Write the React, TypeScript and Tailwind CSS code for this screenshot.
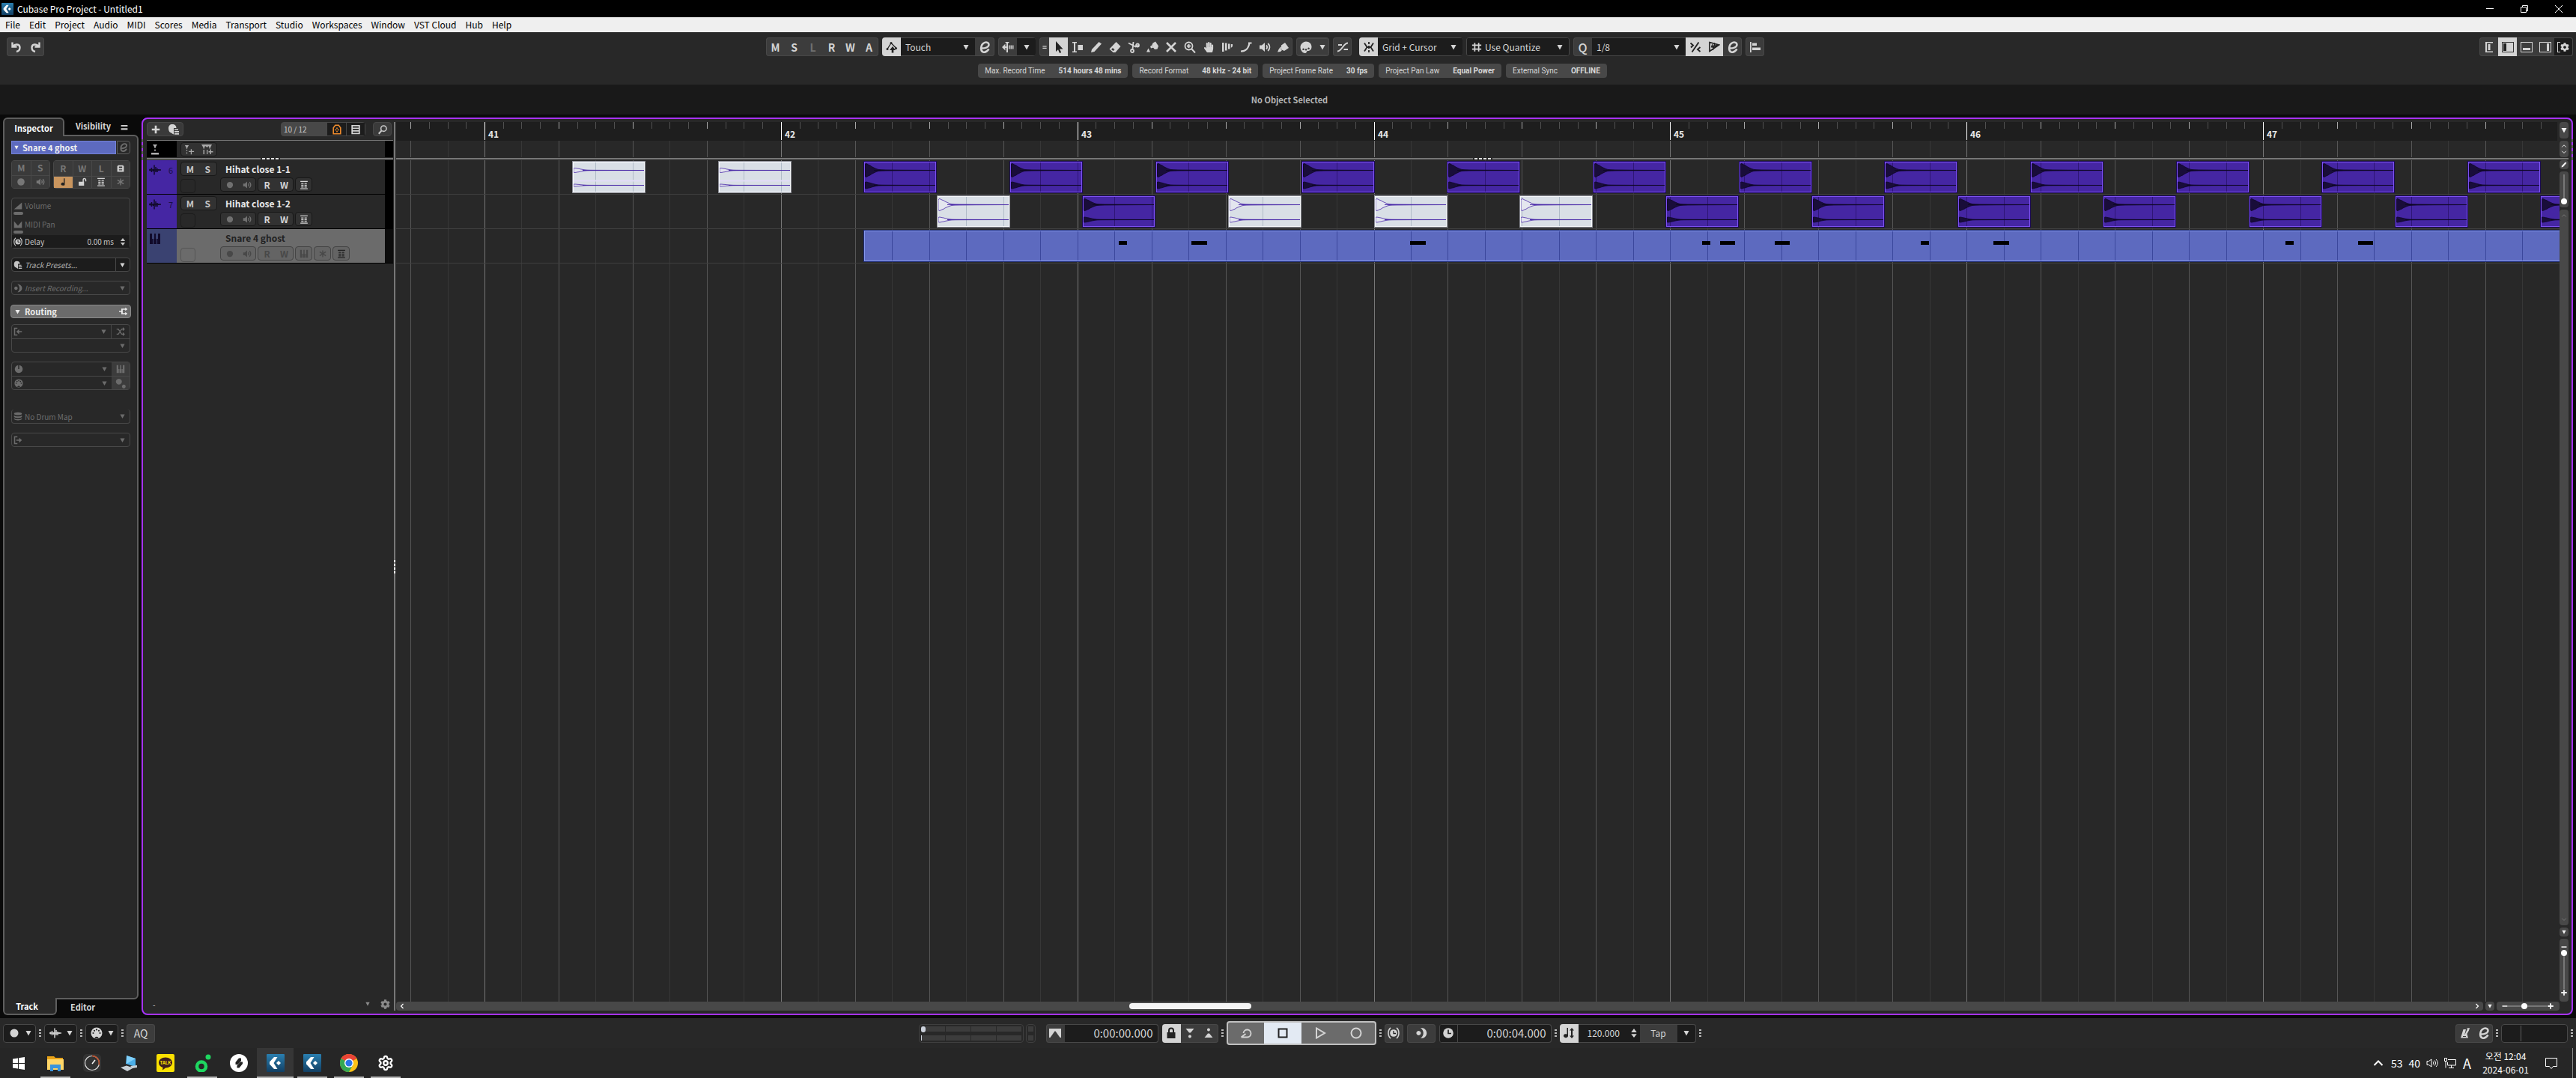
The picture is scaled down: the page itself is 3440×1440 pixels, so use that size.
import React from 'react';
import { FaCog, FaHandPaper } from 'react-icons/fa';
import { Settings } from 'lucide-react';

/* ---------- icons ---------- */

const line = { fill: 'none', stroke: 'currentColor', strokeWidth: 1.8 } as const;

const glyphs: Record<string, React.ReactNode> = {
  undo: <path {...line} strokeWidth={2.4} d="M2.500 1.500v6h6M3.500 6.500C6 3.500 12.500 3.500 12.500 8.500c0 3-2 5-4.500 5.500" />,
  redo: <path {...line} strokeWidth={2.4} d="M13.500 1.500v6h-6M12.500 6.500C10 3.500 3.500 3.500 3.500 8.500c0 3 2 5 4.500 5.500" />,
  edit: <path {...line} strokeWidth={2.5} d="M2.500 9.500C8 10 13.500 8 13.500 4.800 13.500 1 9 .8 6 3S1.500 13 6 14.500c3 .8 5.500-1 7.500-4" />,
  automation: (
    <g>
      <path {...line} strokeWidth={1.3} d="M2 10.500 7 2.500l6.500 6.500" />
      <circle cx="7" cy="2.500" r="1.500" />
      <circle cx="2" cy="10.500" r="1.500" />
      <circle cx="13.500" cy="9.500" r="1.500" />
      <path d="m9 7 4 5h-2.700v3.500H7.700V12H5z" />
    </g>
  ),
  autoscroll: <path d="M0 8l4.500-4.500v9zM4 7h2V3L4 1h6L8 3v12H6V9H4zM9 5.500h1.500v5H9zM11.500 5.500H13v5h-1.500zM14 5.500h1.500v5H14z" />,
  pointer: <path d="M4 0v14l3-2.800L9 16l2.200-1L9 10.500h4.500z" />,
  range: <path d="M1 1h6v1.500H5v11h2V15H1v-1.500h2v-11H1zM8.500 5H15v7H8.500z" />,
  pencil: <path d="m1 15 1-4L11.500 1 15 3.500 5.500 14z" />,
  eraser: <path d="M9.500 1 15.500 7l-7 8H5.500L.5 10.500zM5 9l-2 2 2.500 2 2-1.500z" fillRule="evenodd" />,
  scissorsHoles: (
    <g {...line}>
      <path d="M1 2.500 10.500 7.500l3.500-2M6.500 10.500 7.500 1" />
      <circle cx="13" cy="5.500" r="2" />
      <circle cx="6" cy="13" r="2" />
    </g>
  ),
  glue: <path d="M8.500 2.500 12 .5l4 6-1.500 4-3.500.5-4-5zM7 5.500 5 7l1 2.500 3-1zM2.500 9.500l2.500 5H0z" />,
  cross: <path {...line} strokeWidth={2.600} d="M2 2l12 12M14 2 2 14" />,
  zoom: (
    <g {...line}>
      <circle cx="6.500" cy="6.500" r="5" />
      <path d="M10 10l5 5.500M4 6.500h5M6.500 4v5" strokeWidth={2} />
    </g>
  ),
  search: (
    <g {...line}>
      <circle cx="9.500" cy="6.500" r="4.200" />
      <path d="M6.500 9.500 2 14.500" strokeWidth={2.400} />
    </g>
  ),
  comp: <path d="M1 2h2.500v12H1zM5 2.500h2.500v10H5zM9 3.500h2.500v7H9zM12.800 4H15v3l-2.200 2z" />,
  curve: <path {...line} strokeWidth={2.200} d="M1 13.500C8 13.500 11 10 12.500 2.500M15.500 2.500h-4.500" />,
  speaker: (
    <g>
      <path d="M1 5.500h3L8 2v12l-4-3.500H1z" />
      <path {...line} d="M10 5.500c1.500 1.500 1.500 3.500 0 5M12.200 3c3 2.800 3 7.200 0 10" />
    </g>
  ),
  fill: <path d="M5 5.500 10 2l5 7-6 4-4.500-2zM4 7.500 1.500 11 0 14.500l4-.5 2-2z" />,
  palette: <path fillRule="evenodd" d="M8 .5c4.500 0 7.500 3 7.500 7S13 13 10.500 13 9.500 16 7 16C3 16 .5 11.500.5 8S4 .5 8 .5zM4.500 9.500a1.300 1.300 0 1 0 .1 0zM8 10a1.300 1.300 0 1 0 .1 0zM11.500 8.500a1.300 1.300 0 1 0 .1 0z" />,
  crossfade: <path {...line} strokeWidth={2} d="M1 13.500C7 13.500 9 2.500 15 2.500M2 5h5M9.500 11H15" />,
  snap: <path {...line} strokeWidth={1.800} d="M8 1v3M8 6v4M8 12v3M2 2.500l3.500 5.500L2 13.500M14 2.500l-3.500 5.500 3.500 5.500M5.500 8h5" />,
  hash: <path {...line} strokeWidth={2} d="M5 1.500v13M11 1.500v13M1 5h14M1 11h14" />,
  swing: <path {...line} strokeWidth={1.900} d="M1.500 2.500 5 5.500 2 8.500M12.500 1.500l-9 13M14.500 8 11 11l3.500 3" />,
  quantAudio: <path {...line} strokeWidth={1.700} d="M2 1.500v12L14.500 5zM4.500 8.500l1-3 1.500 4 1.500-5 1 3 2-2.500" />,
  align: <path d="M1 1h1.800v14H1zM4 2.500h6V6H4zM4 8.500h11V12H4z" />,
  plus: <path d="M6.500 2h3v4.500H14v3H9.500V14h-3V9.500H2v-3h4.500z" />,
  preset: <path d="M6 1c3.500 0 5.500 2 5.500 5H8v8.500c-2-.5-2.500-2-4.500-2.500C2 11.500 1 9 1 6.500 1 3 3 1 6 1zM9 7.500h5V9H9zM9 10h6v1.800H9zM9 13h6v1.800H9z" />,
  agent: <path {...line} d="M2.500 14.500v-9l3-4h5l3 4v9zM8 5v2M8 10v2M5 8.500h2M9 8.500h2" />,
  list: <path fillRule="evenodd" d="M1.500 1h13v14h-13zM3.500 3v2h9V3zM3.500 7v2h9V7zM3.500 11v2h9v-2z" />,
  rows: <path d="M1.500 1h13v1.700h-13zM3 4.500h4.200v1.700H3zM8.800 4.500H13v1.700H8.800zM3 7.800h4.200v1.700H3zM8.800 7.800H13v1.700H8.800zM3 11h4.200v1.600H3zM8.800 11H13v1.600H8.800zM1.500 14h13v1.500h-13z" />,
  marker: <path d="M5 1h6L8.700 4.500V6H7.300V4.500zM7.300 7.500h1.400V10H7.300zM3 12h10v2.500H3z" />,
  addMarker: <path d="M1 1h6L4.700 5v1.500H3.300V5zM3.300 8h1.400v2H3.300zM3.300 12h1.400v2H3.300zM10 7h1.500v3H15v1.500h-3.500V15H10v-3.500H7V10h3z" />,
  addCycle: <path d="M0 1h14l-2 4v1.500h-1.500V5L9.500 3 7.700 5 5 3 4 5v1.500H2.500V5zM2.500 8H4v6H2.500zM7 8h1.300v6H7zM11.500 7.500H13V10h2.500v1.500H13V14h-1.500v-2.500H9.500V10h2z" />,
  wave: <path {...line} strokeWidth={1.500} d="M0 8h1.500V6.500v3M3.500 5v6M5.500 7v3M7 1.500v13M9 4v7M11 6v5M13 7v2M1 8h15" />,
  keys: <path d="M1 1h3v7h1v7H1zM6 8h1V1h2v7h1v7H6zM12 1h3v14h-4V8h1z" />,
  record: <circle cx="8" cy="8" r="5.500" />,
  note: <path d="M9.500 1.500h1.800v10a3.300 2.600 0 1 1-1.800-2z" />,
  lock: <path fillRule="evenodd" d="M2.500 7H4V4.500a4 4 0 0 1 8 0V7h1.500v8h-11zM6 7h4V4.500a2 2 0 0 0-4 0z" />,
  unlock: <path d="M1.500 7.500h7V4.500C8.500 2.500 9.500 1 11.500 1S15 2.500 15 4.500V7h-2V4.500c0-2-2.500-2-2.500 0v3H11V14.500H1.500z" />,
  star: <path {...line} d="M8 2v12M2.500 4.500l11 7M13.500 4.500l-11 7" />,
  freeze: <path fillRule="evenodd" d="M3 1h10l2 2v12H1V3zM4.500 4v3h7V4zM4.500 10v2h7v-2z" />,
  volume: <path d="M1 14 15 2v12z" />,
  pan: <path d="M1 2l7 8 7-8v12H1z" />,
  clock: (
    <g>
      <circle cx="8" cy="8" r="6.800" />
      <path d="M8 3.500V8.500h4" fill="none" stroke="#222" strokeWidth={1.700} />
    </g>
  ),
  delay: (
    <g>
      <circle cx="8" cy="8" r="4.800" />
      <path d="M8 5V8.500h3" fill="none" stroke="#222" strokeWidth={1.300} />
      <path {...line} strokeWidth={1.600} d="M4 1c-4 3-4 11 0 14M12 1c4 3 4 11 0 14" />
    </g>
  ),
  insertRec: <path d="M4.500 5a3 3 0 1 1-.1 0zM7 1c11-.5 11 14.500 0 14 5-3.500 5-10.500 0-14z" />,
  routing: <path d="M0 7h4V3h7V1l4 3-4 3V5H6.500v6H11V9l4 3-4 3v-2H4V9H0z" />,
  input: <path d="M1 1h6v2H3v10h4v2H1zM5 8l5-4.500V7h5v2h-5v3.500z" />,
  output: <path d="M1 1h6v2H3v10h4v2H1zM15 8l-5-4.500V7H5v2h5v3.500z" />,
  shuffle: <path {...line} strokeWidth={1.700} d="M1 3.500h3l6 9h4M1 12.500h3l6-9h4M12 1l2.500 2.500L12 6M12 10l2.500 2.500L12 15" />,
  power: <path fillRule="evenodd" d="M8 1a7 7 0 1 0 .1 0zM7 1h2v7H7z" />,
  midi: (
    <g>
      <circle cx="8" cy="8" r="7.500" />
      <g fill="#262626">
        <circle cx="3.500" cy="8" r="1.100" />
        <circle cx="5" cy="4.800" r="1.100" />
        <circle cx="8" cy="3.400" r="1.100" />
        <circle cx="11" cy="4.800" r="1.100" />
        <circle cx="12.500" cy="8" r="1.100" />
        <path d="M5.500 15c0-3 5-3 5 0z" />
      </g>
    </g>
  ),
  gears: <path d="M5.500 1a4.500 4.500 0 1 1-.1 0zM13 10a2.800 2.800 0 1 1-.1 0z" />,
  drum: <path d="M8 1c4 0 7 1 7 2.500S12 6 8 6 1 5 1 3.500 4 1 8 1zM1 6.500c3 2.300 11 2.300 14 0v2.500c-2 3-12 3-14 0zM1 11.500c3 2.300 11 2.300 14 0v1.500c-2 3-12 3-14 0z" />,
  punch: <path d="M0 2h16v12h-1.500L8.500 5.500h-1L1.500 14H0z" />,
  locatorDown: <path d="M2.500 2h11L9 7.500h-2zM8 10.500a2 2 0 1 1-.1 0z" />,
  locatorUp: <path d="M2.500 14h11L9 8.500H7zM8 1.500a2 2 0 1 1-.1 0z" />,
  cycle: <path {...line} d="M1.500 13.500h8a5 5 0 1 0-5-5.500M1.500 13.500l6-4.500" />,
  stop: <path {...line} strokeWidth={2} d="M2.500 2.500h11v11h-11z" />,
  play: <path {...line} strokeWidth={2} d="M3 1.500v13L14 8z" />,
  recordRing: <circle {...line} strokeWidth={2} cx="8" cy="8" r="6.500" />,
  tempo: <path d="M5.500 1H7v10.500a3 2.500 0 1 1-1.500-2zM12 1l3 3.500h-2v7h2L12 15l-3-3.500h2v-7H9z" />,
  metronome: <path d="M2 14.500 5.500 3H9L7 11l4-8.500-1-1L14 1l-1 3.500L10.500 9l1.500 5.500zM5 12h4v1H5z" fillRule="evenodd" />,
  chevUp: <path {...line} strokeWidth={2} d="M2.500 11 8 5.500l5.500 5.500" />,
  chevDown: <path {...line} strokeWidth={2} d="M2.500 5.500 8 11l5.500-5.500" />,
  chevLeft: <path {...line} strokeWidth={2.400} d="M11 2 5 8l6 6" />,
  chevRight: <path {...line} strokeWidth={2.400} d="M5 2l6 6-6 6" />,
  minus: <path d="M1 6.500h14v3H1z" />,
  tri: <path d="M1 2h14L8 15z" />,
  spin: <path d="M8 0l5 6.500H3zM3 9.500h10L8 16z" />,
  equal: <path d="M1 3h14v3.500H1zM1 10h14v3.500H1z" />,
  zoneLeft: <path fillRule="evenodd" d="M3 1h10v1.500H5v11h8V15H3zM6.500 4h3v8h-3z" />,
};

interface IconProps {
  name: string;
  className?: string;
}

const Icon: React.FC<IconProps> = ({ name, className = 'size-4' }) => (
  <svg viewBox="0 0 16 16" fill="currentColor" className={`shrink-0 ${className}`} aria-hidden="true">
    {glyphs[name]}
  </svg>
);

const CubaseLogo: React.FC<{ className: string }> = ({ className }) => (
  <svg viewBox="0 0 24 24" className={className} aria-hidden="true">
    <defs>
      <linearGradient id="cubase" x1="0" y1="0" x2="0" y2="1">
        <stop offset="0" stopColor="#2a7fb0" />
        <stop offset="1" stopColor="#123f63" />
      </linearGradient>
    </defs>
    <rect width="24" height="24" rx="1" fill="url(#cubase)" />
    <path d="M10 4h4.500l-5 8 5 8H10l-6-6.500v-3z" fill="#fff" />
    <path d="m16 9 3 3-3 3-3-3z" fill="#fff" />
  </svg>
);

/* ---------- shared controls ---------- */

const Group: React.FC<{ className?: string; children: React.ReactNode }> = ({ className = '', children }) => (
  <div className={`flex h-[25px] shrink-0 items-stretch overflow-hidden rounded bg-[#3c3c3c] shadow-[inset_0_0_0_1px_#484848] ${className}`}>
    {children}
  </div>
);

interface ToolProps {
  label: string;
  icon?: string;
  on?: boolean;
  className?: string;
  children?: React.ReactNode;
}

const Tool: React.FC<ToolProps> = ({ label, icon, on, className = 'w-[25px]', children }) => (
  <button
    aria-label={label}
    className={`flex shrink-0 items-center justify-center ${on ? 'bg-[#d4d4d4] text-[#222]' : 'text-[#d4d4d4]'} ${className}`}
  >
    {icon ? <Icon name={icon} /> : children}
  </button>
);

interface PickProps {
  label: string;
  value: string;
  className?: string;
  selectClass?: string;
  arrow?: string;
}

const Pick: React.FC<PickProps> = ({ label, value, className = '', selectClass = 'pl-1.5 text-xs', arrow = 'right-2 size-2' }) => (
  <div className={`relative flex items-stretch ${className}`}>
    <select aria-label={label} className={`w-full appearance-none bg-transparent outline-none ${selectClass}`}>
      <option>{value}</option>
    </select>
    <Icon name="tri" className={`pointer-events-none absolute top-1/2 -translate-y-1/2 ${arrow}`} />
  </div>
);

const darkCell = 'border-y border-[#484848] bg-[#1c1c1c] text-[#d4d4d4]';

const Grip: React.FC = () => (
  <div className="flex w-[11px] flex-col items-center justify-center gap-0.5">
    <i className="h-0.5 w-[3px] bg-[#bbb]" />
    <i className="h-0.5 w-[3px] bg-[#bbb]" />
    <i className="h-0.5 w-[3px] bg-[#bbb]" />
  </div>
);

const SplitHandle: React.FC<{ className?: string }> = ({ className = '' }) => (
  <div className={`my-px flex h-0.5 shrink-0 items-center justify-center bg-[#777] ${className}`}>
    <div className="flex gap-0.5 bg-[#282828] px-0.5">
      {[0, 1, 2, 3].map((n) => (
        <i key={n} className="h-0.5 w-1 bg-[#e0e0e0]" />
      ))}
    </div>
  </div>
);

/* ---------- window chrome ---------- */

const TitleBar: React.FC = () => (
  <header className="flex h-[23px] shrink-0 items-center bg-black pl-0.5 text-white">
    <CubaseLogo className="size-4" />
    <h1 className="flex-1 pl-[5px] text-xs">Cubase Pro Project - Untitled1</h1>
    <button aria-label="Minimize" className="flex w-[46px] items-center justify-center">
      <i className="h-px w-2.5 bg-white" />
    </button>
    <button aria-label="Restore" className="flex w-[46px] items-center justify-center">
      <svg viewBox="0 0 10 10" className="size-2.5" fill="none" stroke="#fff">
        <path d="M.5 2.500h7v7h-7zM2.500 2.500v-2h7v7h-2" />
      </svg>
    </button>
    <button aria-label="Close" className="flex w-[46px] items-center justify-center">
      <svg viewBox="0 0 10 10" className="size-2.5" fill="none" stroke="#fff">
        <path d="M0 0l10 10M10 0 0 10" />
      </svg>
    </button>
  </header>
);

const menus = ['File', 'Edit', 'Project', 'Audio', 'MIDI', 'Scores', 'Media', 'Transport', 'Studio', 'Workspaces', 'Window', 'VST Cloud', 'Hub', 'Help'];

const MenuBar: React.FC = () => (
  <nav className="flex h-5 shrink-0 items-center gap-3 bg-[#efefef] pl-[7px] text-xs text-black">
    {menus.map((m) => (
      <button key={m}>{m}</button>
    ))}
  </nav>
);

const status = [
  ['Max. Record Time', '514 hours 48 mins'],
  ['Record Format', '48 kHz - 24 bit'],
  ['Project Frame Rate', '30 fps'],
  ['Project Pan Law', 'Equal Power'],
  ['External Sync', 'OFFLINE'],
];

const toolIcons = ['range', 'pencil', 'eraser', 'scissorsHoles', 'glue', 'cross', 'zoom', 'hand', 'comp', 'curve', 'speaker', 'fill'];

const Toolbar: React.FC = () => (
  <section className="flex h-[70px] shrink-0 flex-col bg-[#282828] pt-[7px]">
    <div className="flex justify-between pl-[9px] pr-1">
      <Group>
        <Tool label="Undo" icon="undo" />
        <Tool label="Redo" icon="redo" />
      </Group>
      <div className="flex gap-[5px] pl-[9px]">
        <Group>
          {['M', 'S', 'L', 'R', 'W', 'A'].map((l) => (
            <Tool key={l} label={l}>
              <b className={`text-sm ${l === 'L' ? 'text-[#707070]' : ''}`}>{l}</b>
            </Tool>
          ))}
        </Group>
        <Group>
          <Tool label="Automation mode" icon="automation" on />
          <Pick label="Automation mode" value="Touch" className={`w-[99px] ${darkCell}`} />
          <Tool label="Open automation panel" icon="edit" className="w-[26px]" />
        </Group>
        <Group>
          <Tool label="Auto-scroll" icon="autoscroll" />
          <Tool label="Auto-scroll settings" className={`w-[25px] ${darkCell}`}>
            <Icon name="tri" className="size-2" />
          </Tool>
        </Group>
        <Group>
          <Tool label="Tool buttons" className="w-[13px]">
            <Icon name="equal" className="h-2 w-1.5" />
          </Tool>
          <Tool label="Object selection" icon="pointer" on />
          {toolIcons.map((t) => (
            <Tool key={t} label={t} icon={t === 'hand' ? undefined : t}>
              <FaHandPaper size={14} />
            </Tool>
          ))}
        </Group>
        <Group className={darkCell}>
          <Tool label="Color" icon="palette" />
          <Tool label="Color menu" className="w-[19px]">
            <Icon name="tri" className="size-2" />
          </Tool>
        </Group>
        <Group>
          <Tool label="Snap to zero crossing" icon="crossfade" />
        </Group>
        <Group className="ml-[5px]">
          <Tool label="Snap" icon="snap" on />
          <Pick label="Snap type" value="Grid + Cursor" className={`w-[113px] ${darkCell}`} />
        </Group>
        <Group className="border-x border-[#484848] bg-[#1c1c1c]">
          <div className={`flex items-center pl-1.5 ${darkCell}`}>
            <Icon name="hash" className="size-3.5" />
          </div>
          <Pick label="Grid type" value="Use Quantize" className={`w-[116px] ${darkCell}`} selectClass="pl-1 text-xs" />
        </Group>
        <Group>
          <Tool label="Quantize">
            <span className="text-base font-medium">Q</span>
          </Tool>
          <Pick label="Quantize preset" value="1/8" className={`w-[125px] ${darkCell}`} />
          <Tool label="Iterative quantize" icon="swing" on />
          <Tool label="Audio quantize" icon="quantAudio" on />
          <Tool label="Open quantize panel" icon="edit" />
        </Group>
        <Group>
          <Tool label="Align" icon="align" />
        </Group>
      </div>
      <Group>
        <Tool label="Left zone" icon="zoneLeft" />
        <Tool label="Inspector zone" on>
          <span className="flex h-3.5 w-4 items-center border border-[#333] pl-px">
            <i className="h-2.5 w-1 bg-[#222]" />
          </span>
        </Tool>
        <Tool label="Lower zone">
          <span className="flex h-3.5 w-4 items-end border border-[#d4d4d4] p-0.5">
            <i className="h-[3px] w-full bg-[#d4d4d4]" />
          </span>
        </Tool>
        <Tool label="Right zone">
          <span className="flex h-3.5 w-4 items-center justify-end border border-[#d4d4d4] pr-0.5">
            <i className="h-2.5 w-[3px] bg-[#d4d4d4]" />
          </span>
        </Tool>
        <Tool label="Set up window layout" className={`w-[25px] rounded-r border-r ${darkCell}`}>
          <i className="h-3.5 w-1 border border-r-0 border-[#d4d4d4]" />
          <FaCog size={12} />
        </Tool>
      </Group>
    </div>
    <div className="mt-2.5 flex justify-center gap-1.5 pl-3 font-[Roboto,sans-serif] text-[10px] leading-[19px] text-[#d8d8d8]">
      {status.map(([k, v]) => (
        <div key={k} className="flex h-[19px] gap-[18px] rounded-sm bg-[#484848] px-[9px]">
          <span>{k}</span>
          <b>{v}</b>
        </div>
      ))}
    </div>
  </section>
);

/* ---------- inspector ---------- */

const cell = 'flex items-center justify-center';
const field = 'flex h-[19px] items-stretch rounded-sm border border-[#484848] text-[#6c6c6c]';

const Inspector: React.FC = () => (
  <aside className="flex w-[181px] shrink-0 flex-col text-[#6c6c6c]">
    <div className="z-10 -mb-0.5 flex h-[25px] items-start text-[11px] leading-[22px] text-[#d8d8d8]">
      <button className="h-[25px] w-[82px] rounded-t-md border-2 border-b-0 border-[#5e5e5e] bg-[#282828] font-bold leading-5 text-white">Inspector</button>
      <button className="flex-1 pl-0.5 font-bold">Visibility</button>
      <button aria-label="Set up inspector" className="flex h-[25px] w-6 items-center">
        <Icon name="equal" className="size-2.5 text-[#ccc]" />
      </button>
    </div>
    <div className="flex min-h-0 flex-1 flex-col rounded-r-md border-2 border-[#5e5e5e] bg-[#282828] px-[9px] pt-1.5 text-[10px]">
      <div className="flex h-[18px] gap-px">
        <button className="flex flex-1 items-center gap-[5px] border border-[#7482d8] bg-[#5d6abf] pl-[3px] text-[#f0f0f0]">
          <Icon name="tri" className="size-1.5" />
          <b className="text-[11px] leading-4">Snare 4 ghost</b>
        </button>
        <button aria-label="Edit instrument" className={`${cell} w-[18px] rounded-r-sm border border-[#5e5e5e]`}>
          <Icon name="edit" className="size-3" />
        </button>
      </div>

      <div className="mt-2 flex h-[38px] gap-1 text-xs font-bold text-[#777]">
        <div className="grid w-[52px] grid-cols-2 gap-px rounded-sm border border-[#484848] bg-[#484848] [&>button]:bg-[#3a3a3a]">
          <button className={cell}>M</button>
          <button className={cell}>S</button>
          <button aria-label="Record enable" className={cell}><Icon name="record" className="size-3.5" /></button>
          <button aria-label="Monitor" className={cell}><Icon name="speaker" className="size-3" /></button>
        </div>
        <div className="grid flex-1 grid-cols-4 gap-px rounded-sm border border-[#484848] bg-[#484848]">
          <button className={`${cell} bg-[#3a3a3a]`}>R</button>
          <button className={`${cell} bg-[#3a3a3a]`}>W</button>
          <button className={`${cell} bg-[#3a3a3a]`}>L</button>
          <button aria-label="Freeze" className={`${cell} bg-[#3a3a3a] text-[#d4d4d4]`}><Icon name="freeze" className="size-2.5" /></button>
          <button aria-label="Toggle timebase" className={`${cell} bg-[#c9955e] text-[#222]`}><Icon name="note" className="size-3" /></button>
          <button aria-label="Lock" className={`${cell} bg-[#3a3a3a] text-[#d4d4d4]`}><Icon name="unlock" className="size-3" /></button>
          <button aria-label="Lanes" className={`${cell} bg-[#3a3a3a] text-[#d4d4d4]`}><Icon name="rows" className="size-3" /></button>
          <button aria-label="Disable" className={`${cell} bg-[#3a3a3a]`}><Icon name="star" className="size-3" /></button>
        </div>
      </div>

      <div className="mt-3 flex h-[68px] flex-col rounded-sm border border-[#484848]">
        <div className="flex h-[25px] flex-col gap-0.5 pl-0.5 pt-1">
          <span className="flex items-center gap-[3px] leading-3"><Icon name="volume" className="size-3" />Volume</span>
          <i className="h-1 w-[13px] rounded-sm bg-[#6c6c6c]" />
        </div>
        <div className="flex h-6 flex-col gap-0.5 pl-0.5 pt-1">
          <span className="flex items-center gap-[3px] leading-3"><Icon name="pan" className="size-3" />MIDI Pan</span>
          <i className="h-1 w-[13px] rounded-sm bg-[#6c6c6c]" />
        </div>
        <label className="flex flex-1 items-center gap-[3px] bg-[#1c1c1c] pl-0.5 pr-1 text-[#c4c4c4]">
          <Icon name="delay" className="size-3" />
          Delay
          <input defaultValue="0.00 ms" className="ml-auto w-16 bg-transparent text-right outline-none" />
          <Icon name="spin" className="ml-1 size-2.5" />
        </label>
      </div>

      <div className={`${field} mt-3 bg-[#1c1c1c]`}>
        <Icon name="preset" className="ml-0.5 size-3 self-center text-[#c4c4c4]" />
        <Pick label="Track presets" value="Track Presets..." className="flex-1 text-[#b0b0b0]" selectClass="mr-[18px] border-r border-[#484848] pl-[3px] italic" arrow="right-1.5 size-[7px] text-[#d4d4d4]" />
      </div>
      <div className={`${field} mt-3`}>
        <Icon name="insertRec" className="ml-0.5 size-3 self-center" />
        <Pick label="Insert recording" value="Insert Recording..." className="flex-1" selectClass="pl-[3px] italic" arrow="right-1.5 size-[7px]" />
      </div>

      <button className="-mx-px mt-[13px] flex h-[18px] items-center gap-1.5 rounded-sm border border-[#8a8a8a] bg-[#6b6b6b] px-[5px] text-[#ececec]">
        <Icon name="tri" className="size-[7px]" />
        <b className="text-[11px] leading-4">Routing</b>
        <Icon name="routing" className="-mr-0.5 ml-auto size-3" />
      </button>

      <div className="mt-2 flex h-[38px] flex-col rounded-sm border border-[#484848]">
        <div className="flex h-[18px]">
          <Icon name="input" className="ml-0.5 size-3 self-center" />
          <Pick label="Input routing" value="" className="flex-1" arrow="right-1.5 size-[7px]" />
          <button aria-label="Input transformer" className={`${cell} w-[25px] border-l border-[#484848]`}><Icon name="shuffle" className="size-3" /></button>
        </div>
        <Pick label="Input channel" value="" className="flex-1 border-t border-[#484848]" arrow="right-1.5 size-[7px]" />
      </div>

      <div className="mt-3 flex h-[38px] flex-col rounded-sm border border-[#484848]">
        <div className="flex h-[18px]">
          <Icon name="power" className="ml-[3px] size-3 self-center" />
          <Pick label="Output routing" value="" className="flex-1" arrow="right-1.5 size-[7px]" />
          <button aria-label="Edit instrument" className={`${cell} w-6 bg-[#3c3c3c]`}><Icon name="keys" className="size-3" /></button>
        </div>
        <div className="flex flex-1 border-t border-[#484848]">
          <Icon name="midi" className="ml-[3px] size-3 self-center" />
          <Pick label="MIDI channel" value="" className="flex-1" arrow="right-1.5 size-[7px]" />
          <button aria-label="Program selector" className={`${cell} w-6 bg-[#3c3c3c]`}><Icon name="gears" className="size-3.5" /></button>
        </div>
      </div>

      <div className={`${field} mt-[26px] border-t-0`}>
        <Icon name="drum" className="ml-0.5 size-3 self-center" />
        <Pick label="Drum map" value="No Drum Map" className="flex-1" selectClass="pl-[3px]" arrow="right-1.5 size-[7px]" />
      </div>
      <div className={`${field} mt-3`}>
        <Icon name="output" className="ml-0.5 size-3 self-center" />
        <Pick label="Output" value="" className="flex-1" arrow="right-1.5 size-[7px]" />
      </div>
    </div>
    <div className="z-10 -mt-0.5 flex h-[23px] text-[11px] font-bold leading-[14px] text-[#d8d8d8]">
      <button className="w-[72px] rounded-b-md border-2 border-t-0 border-[#5e5e5e] bg-[#282828] pr-2 text-white">Track</button>
      <button className="pl-[18px]">Editor</button>
    </div>
  </aside>
);

/* ---------- track list ---------- */

const smallGroup = 'flex h-[19px] items-stretch rounded-sm border border-[#181818] bg-[#323232]';

interface TrackProps {
  name: string;
  num?: string;
  midi?: boolean;
}

const Track: React.FC<TrackProps> = ({ name, num, midi }) => {
  const box = midi ? 'flex h-[19px] items-stretch rounded-sm border border-[#444] bg-[#646464] text-[#484848]' : `${smallGroup} text-[#d4d4d4]`;
  return (
    <div className="flex h-[46px] border-b border-black">
      <div className={`flex w-10 justify-between pl-[3px] pr-[5px] pt-[5px] ${midi ? 'bg-[#3a4271]' : 'bg-[#4526a3]'}`}>
        <Icon name={midi ? 'keys' : 'wave'} className="size-4 text-[#110a2a]" />
        <span className="text-[11px] leading-4 text-[#1a0f45]">{num}</span>
      </div>
      <div className={`flex flex-1 flex-col pl-[5px] pt-0.5 ${midi ? 'bg-[#6b6b6b]' : 'bg-[#282828]'}`}>
        <div className="flex h-[19px] items-center">
          {midi ? (
            <span className="w-[60px]" />
          ) : (
            <div className={`${smallGroup} mr-[11px] w-[49px] text-xs font-bold text-[#c8c8c8]`}>
              <button className={`${cell} flex-1`}>M</button>
              <button className={`${cell} flex-1`}>S</button>
            </div>
          )}
          <b className={`text-xs leading-4 ${midi ? 'text-[#222]' : 'text-[#e8e8e8]'}`}>{name}</b>
        </div>
        <div className="mt-0.5 flex gap-0.5">
          <button aria-label="Lanes" className={`mr-[31px] mt-0.5 h-[19px] w-5 rounded-sm border ${midi ? 'border-[#555]' : 'border-[#1c1c1c]'}`} />
          <div className={`${box} w-12`}>
            <button aria-label="Record enable" className={`${cell} flex-1`}><Icon name="record" className={`size-3 ${midi ? '' : 'text-[#707070]'}`} /></button>
            <button aria-label="Monitor" className={`${cell} flex-1`}><Icon name="speaker" className={`size-3 ${midi ? '' : 'text-[#707070]'}`} /></button>
          </div>
          <div className={`${box} w-12 text-xs font-bold`}>
            <button className={`${cell} flex-1`}>R</button>
            <button className={`${cell} flex-1`}>W</button>
          </div>
          {midi && (
            <>
              <button aria-label="Edit instrument" className={`${box} w-[23px] justify-center`}><Icon name="keys" className="size-3 self-center" /></button>
              <button aria-label="Disable" className={`${box} w-[23px] justify-center`}><Icon name="star" className="size-3 self-center" /></button>
            </>
          )}
          <button aria-label="Show lanes" className={`${box} w-[23px] justify-center`}><Icon name="rows" className={`size-3 self-center ${midi ? 'text-[#222]' : ''}`} /></button>
        </div>
      </div>
      <div className={`w-[11px] ${midi ? 'bg-[#0c0c0c]' : 'bg-black'}`} />
    </div>
  );
};

const TrackList: React.FC = () => (
  <section className="flex w-[329px] shrink-0 flex-col">
    <div className="flex h-6 items-start">
      <div className="flex h-[19px] w-[49px] items-center justify-around rounded-sm border border-[#484848] bg-[#3a3a3a] text-[#d4d4d4]">
        <button aria-label="Add track"><Icon name="plus" className="size-3.5" /></button>
        <button aria-label="Use track preset"><Icon name="preset" className="size-4" /></button>
      </div>
      <div className="ml-auto flex h-[19px] w-[113px] items-stretch rounded-sm border border-[#484848] bg-[#484848] text-[10px] text-[#c8c8c8]">
        <span className="flex-1 pl-[3px] leading-[17px]">10 / 12</span>
        <button aria-label="Visibility agent" className={`${cell} w-[25px] bg-[#1c1c1c] text-[#f08c2e]`}><Icon name="agent" className="size-3.5" /></button>
        <button aria-label="Track types" className={`${cell} w-[25px] border-l border-[#484848] bg-[#1c1c1c] text-[#d4d4d4]`}><Icon name="list" className="size-3.5" /></button>
      </div>
      <button aria-label="Find tracks" className={`${cell} ml-2.5 mr-0.5 h-[19px] w-[25px] rounded-sm border border-[#484848] bg-[#3a3a3a] text-[#c8c8c8]`}>
        <Icon name="search" className="size-3.5" />
      </button>
    </div>
    <div className="h-px bg-[#777]" />
    <div className="flex h-[22px]">
      <div className="w-10 bg-black pl-[3px] pt-1 text-[#b0b0b0]">
        <Icon name="marker" className="size-4" />
      </div>
      <div className="flex-1 pl-[5px] pt-0.5">
        <div className={`${smallGroup} w-[49px] items-center justify-around text-[#a8a8a8]`}>
          <button aria-label="Add marker"><Icon name="addMarker" className="size-3.5" /></button>
          <button aria-label="Add cycle marker"><Icon name="addCycle" className="size-4" /></button>
        </div>
      </div>
      <div className="w-[11px] bg-black" />
    </div>
    <SplitHandle />
    <Track name="Hihat close 1-1" num="6" />
    <Track name="Hihat close 1-2" num="7" />
    <Track name="Snare 4 ghost" midi />
    <div className="mt-auto flex h-[18px] items-center gap-3 pl-2 pr-1 text-[10px] text-[#8a8a8a]">
      <span className="flex-1 text-[#ccc]">-</span>
      <Icon name="tri" className="h-1.5 w-2.5" />
      <FaCog size={13} />
    </div>
  </section>
);

/* ---------- timeline ---------- */

const BAR = 395.84;
const FIRST_BAR = 118;
const LOOP = 194.7;

interface GridLine {
  x: number;
  step: number;
}

// one entry per sixteenth, step 0 is bar 41
const gridLines: GridLine[] = Array.from({ length: 116 }, (_, i) => {
  const step = i - 4;
  return { step, x: Math.round(FIRST_BAR + (step * BAR) / 16) };
});
const eighths = gridLines.filter((g) => g.step % 2 === 0);

const Grid: React.FC = () => (
  <>
    {eighths.map(({ x, step }) => (
      <i
        key={step}
        className={`absolute inset-y-0 w-px ${step % 16 === 0 ? 'bg-[#777]' : step % 4 === 0 ? 'bg-[#565656]' : 'bg-[#373737]'}`}
        style={{ left: x }}
      />
    ))}
  </>
);

const Ruler: React.FC = () => (
  <div className="relative mr-[3px] h-[25px] shrink-0 overflow-hidden bg-[#1e1e1e]">
    {gridLines.map(({ x, step }) =>
      step % 16 === 0 ? (
        <span key={step} className="absolute top-0 h-6 border-l border-white pl-1 pt-2 text-xs font-bold leading-4 text-[#e8e8e8]" style={{ left: x }}>
          {41 + step / 16}
        </span>
      ) : (
        <i key={step} className={`absolute top-0 h-[9px] w-px ${step % 4 === 0 ? 'bg-[#a8a8a8]' : 'bg-[#505050]'}`} style={{ left: x }} />
      ),
    )}
  </div>
);

const envX = [0, 1, 3, 5, 7, 9, 12, 15, 18, 22, 28, 36, 50, 94];
const envY = [0.8, 1, 0.94, 0.8, 0.72, 0.55, 0.38, 0.22, 0.12, 0.08, 0.06, 0.05, 0.03, 0];

const envelope = (mid: number, amp: number) => {
  const top = envX.map((x, i) => `${x},${mid - envY[i] * amp}`);
  const low = envX.map((x, i) => `${x},${mid + envY[i] * amp}`).reverse();
  return [...top, ...low].join(' ');
};

interface ClipProps {
  x: number;
  selected: boolean;
  amps: [number, number];
}

const Clip: React.FC<ClipProps> = ({ x, selected, amps }) => (
  <div
    className={`absolute top-px h-[43px] w-[98px] border ${selected ? 'border-[#8c8e96] bg-[#d9dfe6] text-[#4a2aa8]' : 'border-[#1b0a55] bg-[#4526a3] text-[#0e0626]'}`}
    style={{ left: x }}
  >
    {eighths
      .filter((g) => g.x > x + 2 && g.x < x + 96)
      .map((g) => (
        <i key={g.step} className={`absolute inset-y-0 w-px ${selected ? 'bg-[#b0bcc8]' : 'bg-[#2f1676]'}`} style={{ left: g.x - x - 1 }} />
      ))}
    <div className={`absolute inset-0 border ${selected ? 'border-[#f6f8fb]' : 'border-[#7d50f2]'}`}>
      <svg width="94" height="39" viewBox="0 0 94 39" className="block">
        {selected && amps[0] < 5 && <path d="M0 24.500h94" stroke="#e2dcf7" strokeWidth="2" />}
        <g fill={selected ? '#e4e6ef' : '#190d3a'} stroke="currentColor" strokeWidth="0.8">
          <polygon points={envelope(10.5, amps[0])} />
          <polygon points={envelope(30.5, amps[1])} />
        </g>
        <path d="M12 10.500h82M12 30.500h82" stroke="currentColor" />
      </svg>
    </div>
  </div>
);

const notes = [
  [965, 11], [1062, 21], [1354, 21], [1744, 11], [1768, 20], [1841, 20], [2036, 11], [2133, 21], [2523, 11], [2620, 20],
];

const selectedLow = [0, 2, 3, 4];

const Lanes: React.FC = () => (
  <div className="relative min-h-0 flex-1 overflow-hidden">
    <Grid />
    <div className="relative h-[46px] border-b border-[#3f3f3f]">
      {Array.from({ length: 14 }, (_, k) => (
        <Clip key={k} x={Math.round(235 + k * LOOP)} selected={k < 2} amps={k < 2 ? [3, 1.5] : [9, 4.5]} />
      ))}
    </div>
    <div className="relative h-[46px] border-b border-[#3f3f3f]">
      {Array.from({ length: 12 }, (_, k) => (
        <Clip key={k} x={Math.round(721.600 + k * LOOP)} selected={selectedLow.includes(k)} amps={[8, 3.5]} />
      ))}
    </div>
    <div className="relative h-[46px] border-b border-[#3f3f3f]">
      <div className="absolute left-[624px] right-0 top-px h-[43px] border border-r-0 border-[#1e2a70] bg-[#5d6abf]">
        {eighths
          .filter((g) => g.x > 630)
          .map((g) => (
            <i key={g.step} className="absolute inset-y-0 w-px bg-[#3b479c]" style={{ left: g.x - 625 }} />
          ))}
        <div className="absolute inset-0 border border-r-0 border-[#8699ee]" />
      </div>
      {notes.map(([x, w]) => (
        <i key={x} className="absolute top-4 h-[5px] bg-black" style={{ left: x, width: w }} />
      ))}
    </div>
  </div>
);

const block = 'flex items-center justify-center rounded-sm bg-[#484848] text-[#f0f0f0]';

const Timeline: React.FC = () => (
  <section className="ml-px flex min-w-0 flex-1 flex-col">
    <Ruler />
    <div className="relative h-[22px] shrink-0 overflow-hidden">
      <Grid />
    </div>
    <SplitHandle className="pl-3" />
    <Lanes />
    <div className="flex h-3 shrink-0 gap-[3px]">
      <div className="flex flex-1 items-center rounded-sm bg-[#484848] px-1 text-white">
        <button aria-label="Scroll left"><Icon name="chevLeft" className="block size-2" /></button>
        <div className="flex flex-1">
          <div className="w-[35%]" />
          <div className="h-2 w-[152px] rounded-sm bg-[#f4f4f4] sm:w-[163px]" />
        </div>
        <button aria-label="Scroll right"><Icon name="chevRight" className="block size-2" /></button>
      </div>
      <button aria-label="Zoom presets" className={`${block} w-3`}><Icon name="tri" className="size-1.5" /></button>
      <div className={`${block} w-[84px] justify-between px-[3px]`}>
        <button aria-label="Zoom out"><Icon name="minus" className="block size-2" /></button>
        <input
          type="range"
          aria-label="Horizontal zoom"
          defaultValue={40}
          className="h-2 w-[52px] appearance-none bg-transparent [&::-webkit-slider-runnable-track]:h-0.5 [&::-webkit-slider-runnable-track]:bg-[#777] [&::-webkit-slider-thumb]:-mt-[3px] [&::-webkit-slider-thumb]:size-2 [&::-webkit-slider-thumb]:appearance-none [&::-webkit-slider-thumb]:rounded-full [&::-webkit-slider-thumb]:bg-white"
        />
        <button aria-label="Zoom in"><Icon name="plus" className="block size-2.5" /></button>
      </div>
    </div>
  </section>
);

const vRange =
  'w-2 appearance-none bg-transparent [writing-mode:vertical-lr] [&::-webkit-slider-runnable-track]:w-0.5 [&::-webkit-slider-runnable-track]:bg-[#777] [&::-webkit-slider-thumb]:-ml-[3px] [&::-webkit-slider-thumb]:size-2 [&::-webkit-slider-thumb]:appearance-none [&::-webkit-slider-thumb]:rounded-full [&::-webkit-slider-thumb]:bg-white';

const RightStrip: React.FC = () => (
  <div className="flex w-3 shrink-0 flex-col">
    <button aria-label="Ruler options" className={`${block} h-[22px]`}><Icon name="tri" className="size-2" /></button>
    <div className={`${block} mt-[3px] h-[22px] flex-col justify-between py-0.5`}>
      <button aria-label="Previous marker track"><Icon name="chevUp" className="block size-2" /></button>
      <button aria-label="Next marker track"><Icon name="chevDown" className="block size-2" /></button>
    </div>
    <div className="my-px h-0.5 bg-[#777]" />
    <button aria-label="Edit waveform zoom" className={`${block} h-3`}><Icon name="pencil" className="size-2" /></button>
    <div className={`${block} mt-[3px] h-12`}>
      <input type="range" aria-label="Waveform zoom" defaultValue={100} className={`h-10 ${vRange}`} />
    </div>
    <div className="mt-[3px] flex flex-1 flex-col items-center justify-between rounded-sm bg-[#484848] py-1 text-[#777]">
      <button aria-label="Scroll up"><Icon name="chevUp" className="block size-2" /></button>
      <button aria-label="Scroll down"><Icon name="chevDown" className="block size-2" /></button>
    </div>
    <button aria-label="Track zoom presets" className={`${block} mt-[3px] h-3`}><Icon name="tri" className="size-1.5" /></button>
    <div className={`${block} mb-3 mt-[3px] h-[84px] flex-col justify-between py-[3px]`}>
      <button aria-label="Zoom tracks out"><Icon name="minus" className="block size-2" /></button>
      <input type="range" aria-label="Vertical zoom" defaultValue={0} className={`h-[52px] ${vRange}`} />
      <button aria-label="Zoom tracks in"><Icon name="plus" className="block size-2.5" /></button>
    </div>
  </div>
);

const EdgeHandle: React.FC<{ side: string }> = ({ side }) => (
  <div className={`absolute top-[27px] flex h-7 w-0.5 flex-col justify-between bg-[#a733ff] ${side}`}>
    {[0, 1, 2, 3].map((n) => (
      <i key={n} className="h-1 bg-[#5e5e5e]" />
    ))}
  </div>
);

const ProjectZone: React.FC = () => (
  <main className="relative flex min-w-0 flex-1 rounded-lg border-2 border-[#a733ff] bg-[#282828] py-1 pl-[5px] pr-1">
    <EdgeHandle side="-left-0.5" />
    <EdgeHandle side="-right-0.5" />
    <TrackList />
    <div className="ml-px flex w-0.5 shrink-0 flex-col items-center justify-center gap-0.5 bg-[#777]">
      <i className="h-[3px] w-0.5 bg-white" />
      <i className="h-[3px] w-0.5 bg-white" />
      <i className="h-[3px] w-0.5 bg-white" />
      <i className="h-[3px] w-0.5 bg-white" />
    </div>
    <Timeline />
    <RightStrip />
  </main>
);

/* ---------- transport ---------- */

const MenuButton: React.FC<{ label: string; icon: string }> = ({ label, icon }) => (
  <button aria-label={label} className="flex h-[25px] w-11 items-center justify-around rounded border border-[#484848] bg-[#1c1c1c] px-0.5 text-[#d4d4d4]">
    <Icon name={icon} />
    <Icon name="tri" className="size-2" />
  </button>
);

const Meter: React.FC = () => (
  <div className="flex h-[7px] gap-px">
    {[0, 1, 2, 3].map((n) => (
      <i key={n} className="flex-1 bg-[#3c3c3c]" />
    ))}
  </div>
);

const TransportBar: React.FC = () => (
  <section className="flex h-10 shrink-0 items-center justify-between bg-[#282828] pl-1 text-[#d4d4d4]">
    <div className="flex">
      <MenuButton label="Audio record mode" icon="record" />
      <Grip />
      <MenuButton label="Audio retrospective record" icon="wave" />
      <Grip />
      <MenuButton label="MIDI record mode" icon="midi" />
      <Grip />
      <Group>
        <Tool label="Auto quantize" className="w-[38px]">
          <span className="text-sm">AQ</span>
        </Tool>
      </Group>
    </div>

    <div className="flex items-center pl-4">
      <div className="relative flex h-[25px] w-[140px] flex-col justify-center gap-[5px] rounded-sm border border-[#3f3f3f] px-0.5">
        <Meter />
        <Meter />
        <i className="absolute left-0.5 top-0.5 h-2 w-1.5 rounded-sm bg-[#ccd2dc]" />
        <i className="absolute bottom-0.5 left-0.5 h-[7px] w-px bg-[#ccd2dc]" />
      </div>
      <div className="ml-[3px] mr-3.5 flex h-[25px] w-[13px] flex-col items-center justify-center gap-[5px] rounded-sm border border-[#3f3f3f]">
        <i className="h-[7px] w-[7px] bg-[#3c3c3c]" />
        <i className="h-[7px] w-[7px] bg-[#3c3c3c]" />
      </div>
      <Group>
        <Tool label="Punch in" icon="punch" />
        <input aria-label="Primary time" defaultValue="0:00:00.000" className={`w-[125px] rounded-r border-r pr-1.5 text-right text-[15px] outline-none ${darkCell}`} />
      </Group>
      <Group className="ml-[5px]">
        <Tool label="Lock punch points" icon="lock" on />
        <Tool label="Punch in point" icon="locatorDown" />
        <Tool label="Punch out point" icon="locatorUp" />
      </Group>
      <Grip />
      <div className="flex h-8 w-[200px] items-stretch overflow-hidden rounded border-2 border-[#c0c0c0] bg-[#6b6b6b]">
        <Tool label="Cycle" icon="cycle" className="flex-1" />
        <Tool label="Stop" className="w-[50px] bg-[#e3eaf3]">
          <Icon name="stop" className="size-4 text-[#222]" />
        </Tool>
        <Tool label="Start" icon="play" className="flex-1" />
        <Tool label="Record" icon="recordRing" className="flex-1" />
      </div>
      <Grip />
      <Group>
        <Tool label="Pre-roll" icon="delay" />
      </Group>
      <Group className="ml-[5px]">
        <Tool label="Post-roll" icon="insertRec" className="w-[38px]" />
      </Group>
      <Group className="ml-[5px] border-l border-[#484848]">
        <Tool label="Time format" icon="clock" className={`w-6 border-r ${darkCell}`} />
        <input aria-label="Secondary time" defaultValue="0:00:04.000" className={`w-[125px] rounded-r border-r pr-1.5 text-right text-[15px] outline-none ${darkCell}`} />
      </Group>
      <Grip />
      <Group>
        <Tool label="Tempo track" icon="tempo" on />
        <label className={`flex w-[82px] items-center pl-3 ${darkCell}`}>
          <input aria-label="Tempo" defaultValue="120.000" className="w-14 bg-transparent text-xs outline-none" />
          <Icon name="spin" className="size-3" />
        </label>
        <button className="w-[50px] text-xs">Tap</button>
        <Tool label="Tempo options" className={`w-[25px] rounded-r border-r ${darkCell}`}>
          <Icon name="tri" className="size-2" />
        </Tool>
      </Group>
      <Grip />
    </div>

    <div className="flex">
      <Group>
        <Tool label="Metronome" icon="metronome" />
        <Tool label="Metronome setup" icon="edit" />
      </Group>
      <Grip />
      <div className="flex h-[25px] w-[89px] items-center rounded border border-[#484848] bg-[#1c1c1c]">
        <i className="ml-[25px] h-[21px] w-px bg-[#5e5e5e]" />
      </div>
      <Grip />
    </div>
  </section>
);

/* ---------- taskbar ---------- */

const apps: { name: string; art: React.ReactNode; open?: boolean; active?: boolean }[] = [
  { name: 'Start', art: <path d="M4 6.500 11 5.500V12H4zM12 5.300 20 4v8h-8zM4 13h7v6.500l-7-1zM12 13h8v8l-8-1.200z" fill="#fff" /> },
  {
    name: 'File Explorer',
    open: true,
    art: (
      <>
        <path d="M1 3h9l2 2h10v16H1z" fill="#e8a217" />
        <path d="M1 7h22v14H1z" fill="#ffd668" />
        <path d="M5 14h14v9h-4v-4H9v4H5z" fill="#3a94dc" />
      </>
    ),
  },
  {
    name: 'Gauge',
    art: (
      <>
        <rect width="24" height="24" rx="5" fill="#333" />
        <circle cx="12" cy="12" r="9.500" fill="none" stroke="#ddd" strokeWidth="1.200" />
        <path d="M12 2.500a9.500 9.500 0 0 1 9 12" fill="none" stroke="#c0502a" strokeWidth="1.500" />
        <path d="m12 13 4-5" stroke="#fff" strokeWidth="1.500" />
      </>
    ),
  },
  {
    name: 'Remote PC',
    art: (
      <>
        <path d="M9 2l12 4v11L8 13z" fill="#4aaee8" />
        <path d="M9 2l12 4-12 7z" fill="#7fd0fa" />
        <path d="M1 18l8-2.500 9 3-8 4.500zM14 16l9-1v3l-6 1z" fill="#c8d0d6" />
      </>
    ),
  },
  {
    name: 'KakaoTalk',
    art: (
      <>
        <rect width="24" height="24" rx="2" fill="#fae100" />
        <path d="M12 4.500c5 0 9 3 9 7s-4 7-9 7l-4 3 .5-3.500C5 17 3 14.500 3 11.500c0-4 4-7 9-7z" fill="#3c1e1e" />
        <text x="12" y="14" textAnchor="middle" fontSize="6" fontWeight="bold" fill="#fae100">TALK</text>
      </>
    ),
  },
  {
    name: 'Music',
    open: true,
    art: (
      <>
        <circle cx="11" cy="16.500" r="6" fill="none" stroke="#1ed760" strokeWidth="4.500" />
        <circle cx="20" cy="4" r="3.500" fill="#1ed760" />
      </>
    ),
  },
  {
    name: 'Splice',
    art: (
      <>
        <circle cx="12" cy="12" r="12" fill="#fff" />
        <path d="M7.500 11 12 5.500h3V9l-4.500 5h-3zM9.500 15.500 14 10.500h3V13l-4.500 5.500h-3z" fill="#222" />
      </>
    ),
  },
  { name: 'Cubase', open: true, active: true, art: null },
  { name: 'Cubase Hub', open: true, art: null },
  {
    name: 'Chrome',
    open: true,
    art: (
      <>
        <circle cx="12" cy="12" r="12" fill="#fbc116" />
        <path d="M12 12 1.600 6A12 12 0 0 1 22.400 6z" fill="#ea4335" />
        <path d="M12 12 1.600 6A12 12 0 0 0 12 24l5-9z" fill="#34a853" />
        <circle cx="12" cy="12" r="6" fill="#fff" />
        <circle cx="12" cy="12" r="4.600" fill="#2a75e8" />
      </>
    ),
  },
];

const Taskbar: React.FC = () => (
  <footer className="flex h-10 shrink-0 items-stretch bg-[#262626] text-white">
    {apps.map(({ name, art, open, active }) => (
      <button
        key={name}
        aria-label={name}
        className={`flex w-[49px] flex-col items-center justify-between pt-2 ${active ? 'bg-[#363636]' : ''}`}
      >
        {art ? (
          <svg viewBox="0 0 24 24" className="size-6">{art}</svg>
        ) : (
          <CubaseLogo className="size-6" />
        )}
        <i className={`h-0.5 ${active ? 'w-full' : 'w-10'} ${open ? 'bg-[#b4b4b4]' : ''}`} />
      </button>
    ))}
    <button aria-label="Settings" className="flex w-[49px] flex-col items-center justify-between pt-[9px]">
      <Settings size={22} strokeWidth={2.5} />
      <i className="h-0.5 w-10 bg-[#b4b4b4]" />
    </button>
    <div className="ml-auto flex items-center">
      <Icon name="chevUp" className="mr-[9px] size-4" />
      <span className="mr-2 text-sm">53</span>
      <span className="mr-2 text-sm">40</span>
      <svg viewBox="0 0 16 16" className="mr-2 size-4" fill="none" stroke="#fff">
        <path d="M1 5.500h2.500L7 3v10l-3.500-2.500H1zM9 6c1 1 1 3 0 4M11 4.500c2 2 2 5 0 7M13 3c3 3 3 7 0 10" />
      </svg>
      <svg viewBox="0 0 16 16" className="mr-2 size-4" fill="none" stroke="#fff">
        <path d="M5 3.500h10.500v7.500h-11V7M.5 1.500h3v4h-3zM2 5.500v9M9.500 11v3.500M6 14.500h7" />
      </svg>
      <span className="mr-3 w-[13px] text-center text-lg">A</span>
      <div className="flex w-[66px] flex-col text-center text-xs leading-[18px]">
        <span>오전 12:04</span>
        <span>2024-06-01</span>
      </div>
      <svg viewBox="0 0 16 16" className="mx-5 size-4" fill="none" stroke="#fff">
        <path d="M.5 1.500h15v11h-5l-2.500 3-2.500-3h-5z" />
      </svg>
      <i className="mr-1 h-full w-px bg-[#8a8a8a]" />
    </div>
  </footer>
);

export default function App() {
  return (
    <div className="flex h-screen flex-col overflow-hidden bg-[#0a0a0a] font-['Noto_Sans_CJK_KR','Noto_Sans',sans-serif]">
      <TitleBar />
      <MenuBar />
      <Toolbar />
      <div className="flex h-10 shrink-0 items-center justify-center bg-[#191919] pl-1 text-[11px] font-bold text-[#b4b4b4]">No Object Selected</div>
      <div className="flex min-h-0 flex-1 gap-1 p-1">
        <Inspector />
        <ProjectZone />
      </div>
      <TransportBar />
      <Taskbar />
    </div>
  );
}
